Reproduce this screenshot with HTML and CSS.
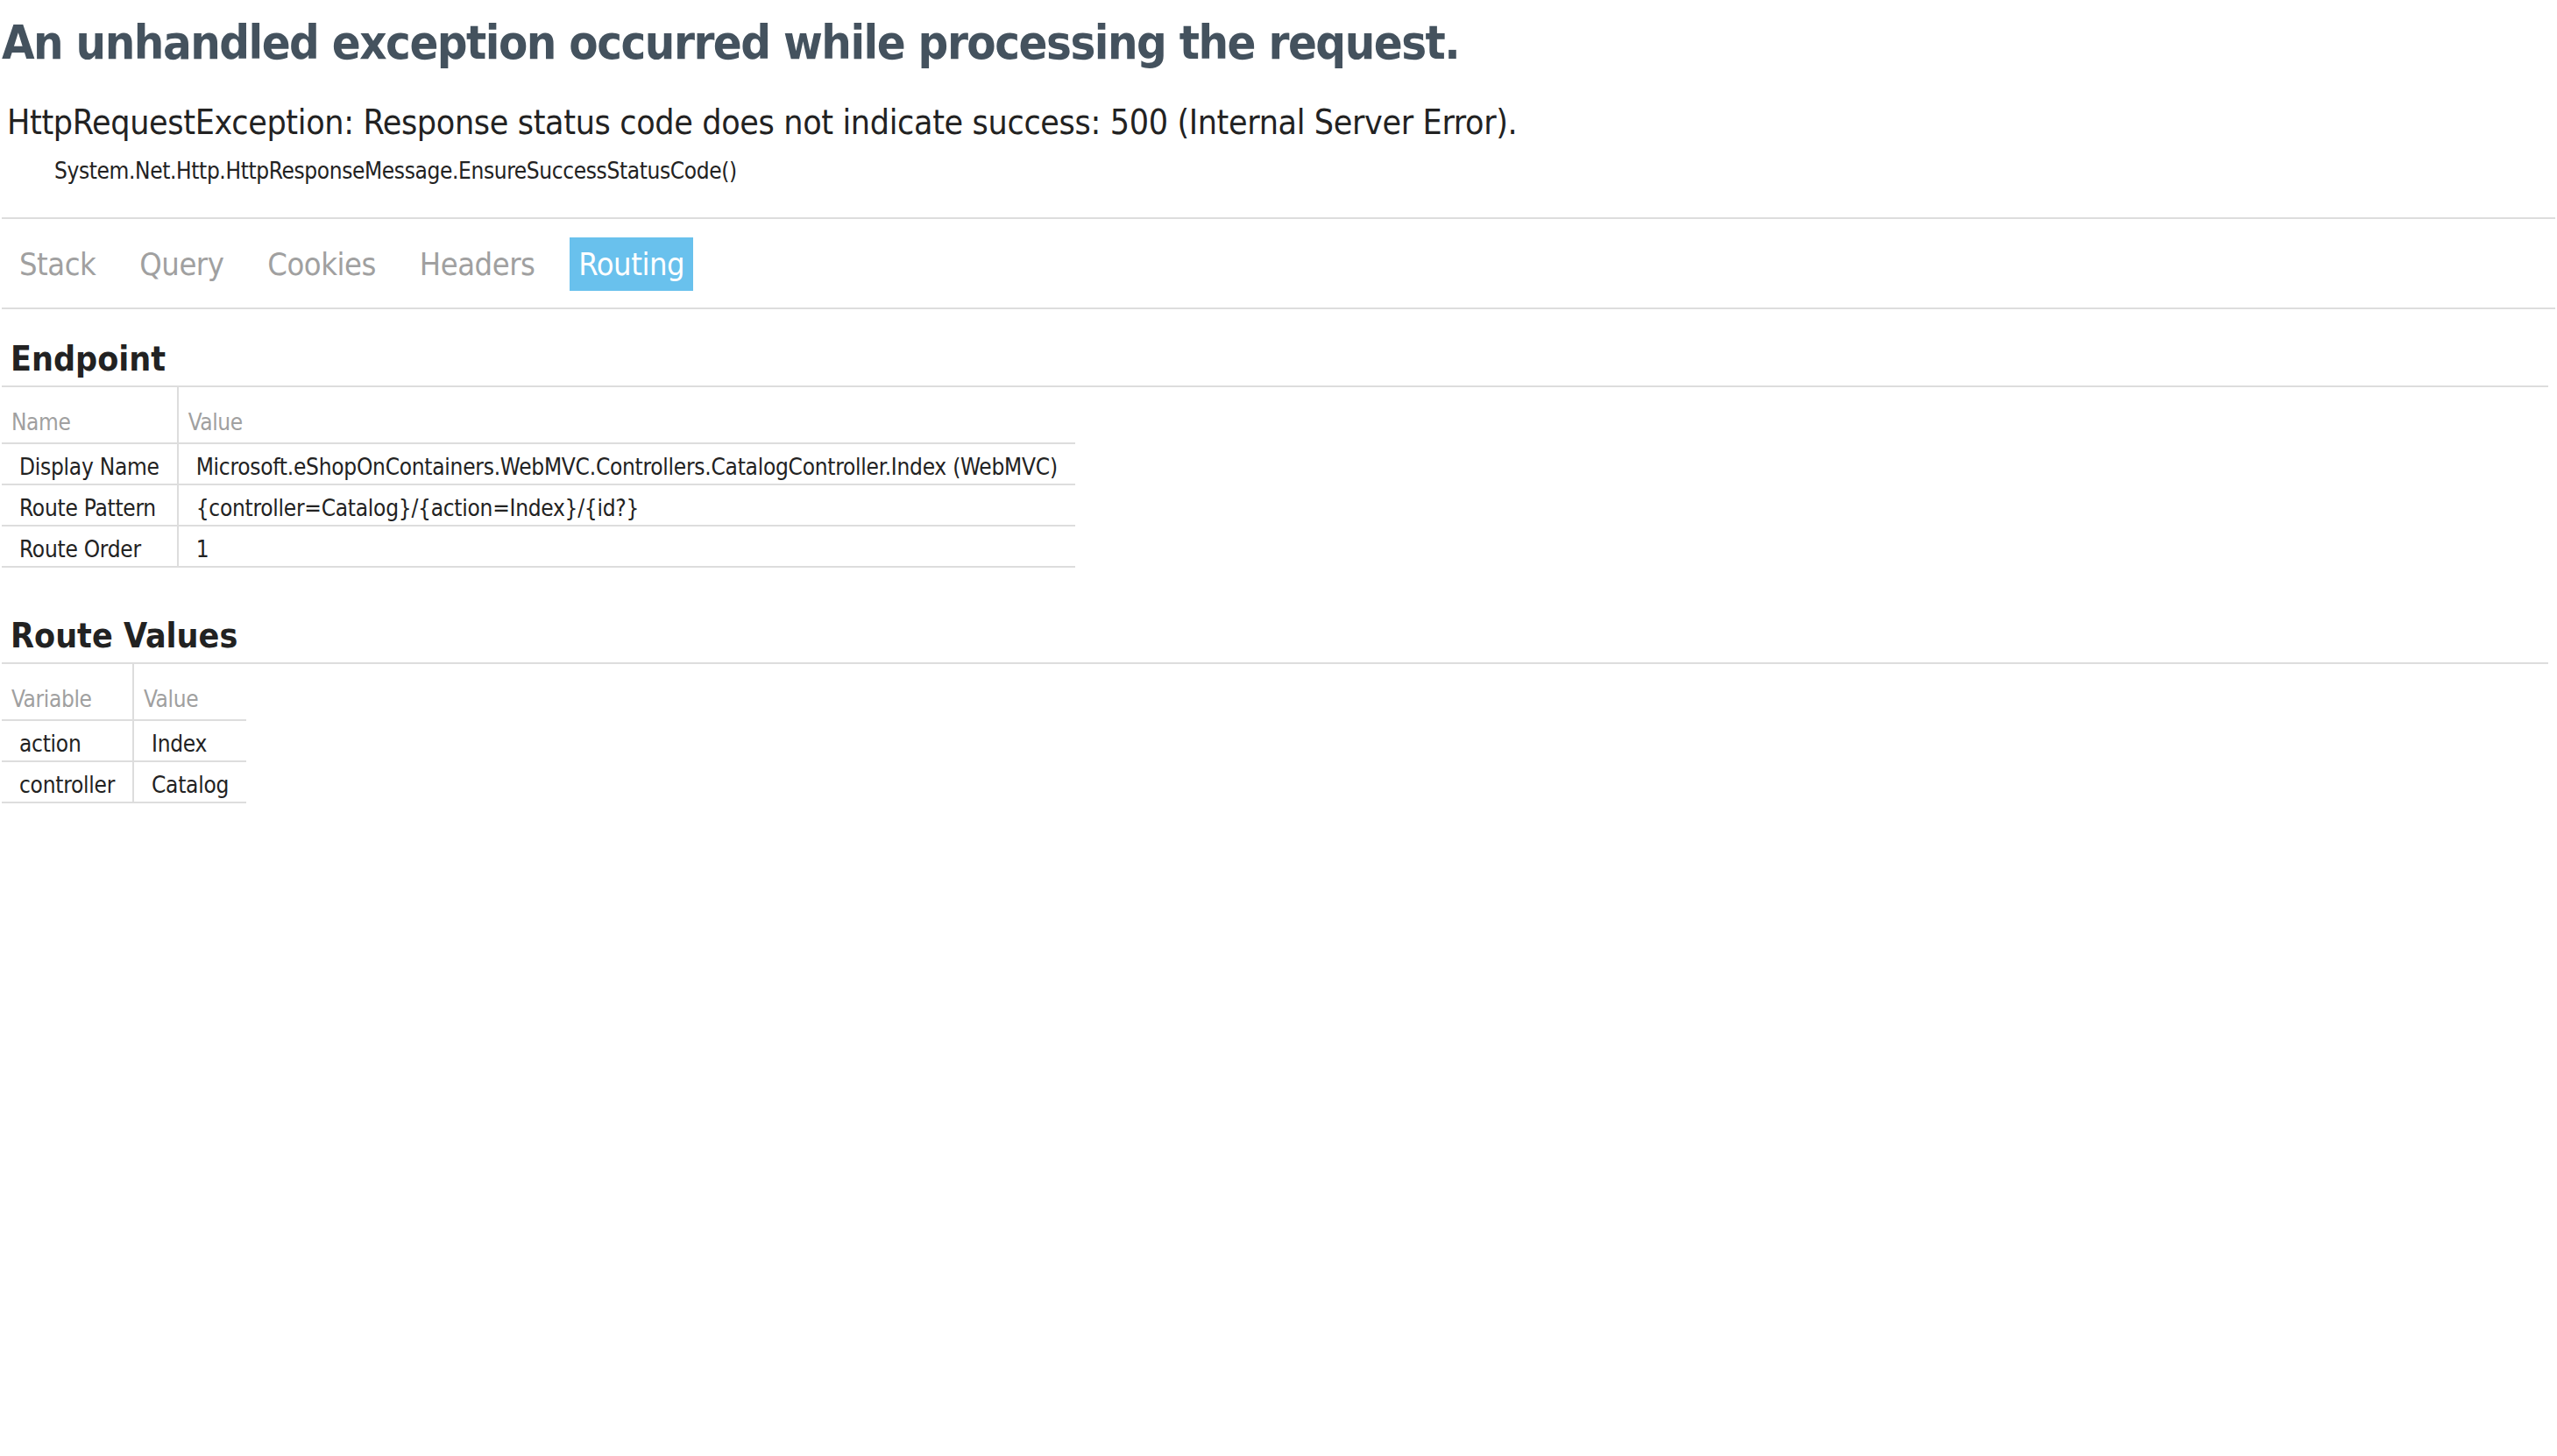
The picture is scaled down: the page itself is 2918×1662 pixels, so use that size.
FILE: index.html
```html
<!DOCTYPE html>
<html lang="en">
<head>
    <meta charset="UTF-8">
    <meta name="viewport" content="width=device-width, initial-scale=1.0">
    <title>Internal Server Error</title>
    <link rel="stylesheet" href="styles.css">
</head>
<body>
    <h1>An unhandled exception occurred while processing the request.</h1>
    <div class="titleerror">HttpRequestException: Response status code does not indicate success: 500 (Internal Server Error).</div>
    <div class="location">System.Net.Http.HttpResponseMessage.EnsureSuccessStatusCode()</div>

    <ul id="header">
        <li>Stack</li>
        <li>Query</li>
        <li>Cookies</li>
        <li>Headers</li>
        <li class="selected">Routing</li>
    </ul>

    <div id="routingpage">
        <div class="subheader"><h2>Endpoint</h2></div>
        <table>
            <thead>
                <tr>
                    <th>Name</th>
                    <th>Value</th>
                </tr>
            </thead>
            <tbody>
                <tr>
                    <td>Display Name</td>
                    <td>Microsoft.eShopOnContainers.WebMVC.Controllers.CatalogController.Index (WebMVC)</td>
                </tr>
                <tr>
                    <td>Route Pattern</td>
                    <td>{controller=Catalog}/{action=Index}/{id?}</td>
                </tr>
                <tr>
                    <td>Route Order</td>
                    <td>1</td>
                </tr>
            </tbody>
        </table>

        <div class="subheader"><h2>Route Values</h2></div>
        <table>
            <thead>
                <tr>
                    <th>Variable</th>
                    <th>Value</th>
                </tr>
            </thead>
            <tbody>
                <tr>
                    <td>action</td>
                    <td>Index</td>
                </tr>
                <tr>
                    <td>controller</td>
                    <td>Catalog</td>
                </tr>
            </tbody>
        </table>
    </div>
</body>
</html>
```

FILE: styles.css
```css
body{
    margin: 0 2px;
    font-family: "DejaVu Sans Condensed", "DejaVu Sans", sans-serif;
    font-size: 26px;
    letter-spacing: -0.37px;
    color: #222;
    background-color: #fff;
}

h1{
    margin: 13px 0 26px 0;
    font-size: 54px;
    line-height: 72px;
    letter-spacing: -1.5px;
    color: #44525e;
}

.titleerror{
    padding: 6px 6px 12px 6px;
    font-size: 39px;
    line-height: 46px;
    letter-spacing: -0.35px;
}

.location{
    margin: 5px 0 0 60px;
    line-height: 30px;
}

/* 标签栏 */
#header{
    margin: 38px 0 0 0;
    padding: 30px 0 27px 0;
    list-style: none;
    font-size: 36px;
    line-height: 44px;
    letter-spacing: -0.45px;
    border-top: 2px #ddd solid;
    border-bottom: 2px #ddd solid;
}

#header li{
    display: inline;
    margin: 10px;
    padding: 10px;
    color: #a0a0a0;
}

#header .selected{
    background: #69c1ed;
    color: #fff;
}

.subheader{
    margin-right: 8px;
    padding: 34px 10px 7px 10px;
    border-bottom: 2px #ddd solid;
}

.subheader h2{
    margin: 0;
    font-size: 39px;
    line-height: 46px;
    letter-spacing: 0;
}

table{
    margin: 0 0 21px 0;
    border-collapse: separate;
    border-spacing: 0;
}

th{
    padding: 25px 10px 8px 11px;
    line-height: 30px;
    text-align: left;
    font-weight: normal;
    color: #a0a0a0;
    border-bottom: 2px #ddd solid;
}

td{
    padding: 11px 20px 4px 20px;
    line-height: 30px;
    letter-spacing: -0.25px;
    border-bottom: 2px #ddd solid;
}

th:first-child,
td:first-child{
    border-right: 2px #ddd solid;
}
```
